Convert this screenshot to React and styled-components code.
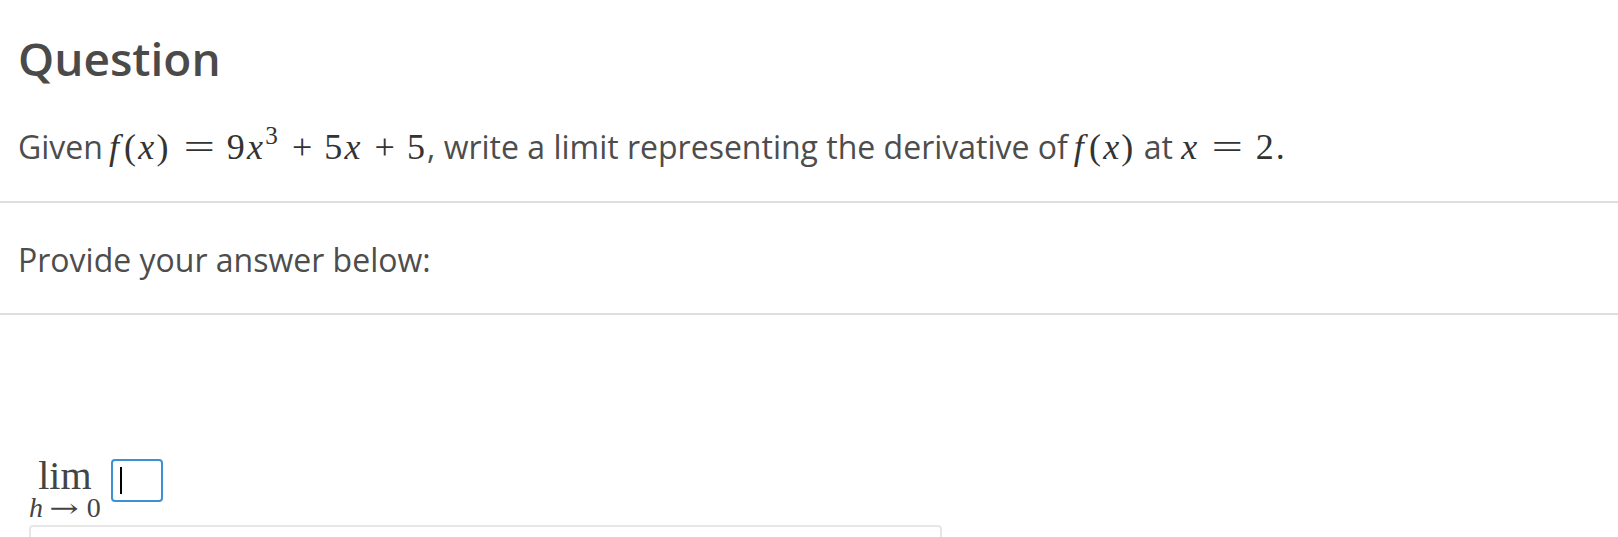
import React from 'react';
import styled, { createGlobalStyle } from 'styled-components';

const Global = createGlobalStyle`
  body {
    margin: 0;
    background: #fff;
    font-family: "Open Sans", "Noto Sans", sans-serif;
    color: #4a4a4a;
    overflow: hidden;
  }
`;

const Page = styled.div`
  display: flex;
  flex-direction: column;
`;

const Header = styled.header`
  padding: 31px 18px 0;
`;

const Title = styled.h1`
  margin: 0;
  font-size: 46px;
  font-weight: 600;
  line-height: 55px;
  color: #4a4a4a;
`;

const Section = styled.section`
  padding: ${p => p.$pad};
  border-bottom: ${p => (p.$divider ? '2px solid #dedede' : 'none')};
`;

const Text = styled.p`
  margin: 0;
  font-size: 32px;
  line-height: 40px;
  color: #4d4d4d;
  white-space: nowrap;
`;

const Math = styled.span`
  font-family: "Liberation Serif", "DejaVu Serif", serif;
  font-size: 36px;
  letter-spacing: 0.06em;
  color: #333;
  white-space: nowrap;
  margin: 0 ${p => p.$trail || '0'} 0 ${p => p.$lead || '0'};
`;

const V = styled.i`
  font-style: italic;
  padding-right: ${p => p.$corr || '0'};
`;

const Sup = styled.sup`
  font-size: 0.7em;
  vertical-align: 0.6em;
  line-height: 0;
`;

// relations get a wider, stretched glyph like the TeX "="
const Op = styled.span`
  display: inline-block;
  letter-spacing: 0;
  transform: ${p => (p.$rel ? 'scaleX(1.55)' : 'none')};
  margin: 0 ${p => (p.$rel ? '18px' : '12px')};
`;

const AnswerArea = styled.div`
  padding: 139px 0 0 29px;
  display: flex;
  flex-direction: column;
  align-items: flex-start;
`;

const LimRow = styled.div`
  display: flex;
  align-items: flex-start;
  gap: 10px;
`;

const LimCol = styled.div`
  display: flex;
  flex-direction: column;
  align-items: center;
  font-family: "Liberation Serif", "DejaVu Serif", serif;
  color: #444;
`;

const LimWord = styled.span`
  font-size: 40px;
  line-height: 44px;
`;

const LimUnder = styled.span`
  font-size: 28px;
  line-height: 20px;
  white-space: nowrap;
  display: flex;
  align-items: baseline;
`;

const Arrow = styled.span`
  display: inline-block;
  font-family: "DejaVu Serif", serif;
  font-size: 26px;
  transform: scaleX(1.35);
  margin: 0 12px 0 10px;
`;

const InputBox = styled.div`
  box-sizing: border-box;
  margin-top: 5px;
  width: 52px;
  height: 43px;
  border: 2px solid #3a91d6;
  border-radius: 4px;
  display: flex;
  align-items: center;
  padding-left: 7px;
`;

const Caret = styled.span`
  width: 2px;
  height: 27px;
  background: #000;
`;

const EditorBox = styled.div`
  margin-top: 7px;
  width: 909px;
  height: 60px;
  border: 2px solid #e6e6e6;
  border-radius: 4px 4px 0 0;
`;

export default function App() {
  return (
    <Page>
      <Global />
      <Header>
        <Title>Question</Title>
      </Header>
      <Section $pad="41px 18px 34px" $divider>
        <Text>
          Given
          <Math $lead="6px">
            <V $corr="3px">f</V>(<V>x</V>)<Op $rel>=</Op>9<V>x</V>
            <Sup>3</Sup>
            <Op>+</Op>5<V>x</V>
            <Op>+</Op>5
          </Math>
          , write a limit representing the derivative of
          <Math $lead="6px">
            <V $corr="3px">f</V>(<V>x</V>)
          </Math>{' '}
          at{' '}
          <Math>
            <V>x</V>
            <Op $rel>=</Op>2.
          </Math>
        </Text>
      </Section>
      <Section $pad="37px 18px 33px" $divider>
        <Text>Provide your answer below:</Text>
      </Section>
      <AnswerArea>
        <LimRow>
          <LimCol>
            <LimWord>lim</LimWord>
            <LimUnder>
              <i>h</i>
              <Arrow>→</Arrow>0
            </LimUnder>
          </LimCol>
          <InputBox>
            <Caret />
          </InputBox>
        </LimRow>
        <EditorBox />
      </AnswerArea>
    </Page>
  );
}
